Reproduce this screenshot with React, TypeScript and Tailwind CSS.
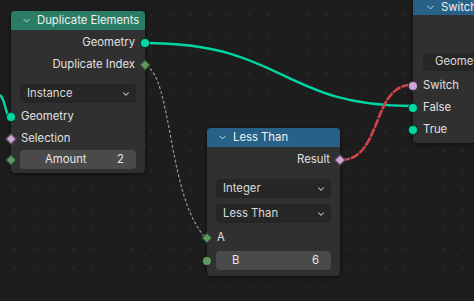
import { ChevronDown } from "lucide-react";
import type { ReactNode } from "react";

const TEAL = "#00d6a3";
const PINK = "#cca6d6";
const GREEN = "#5d9a62";

function Socket({ color, shape = "circle", side }: { color: string; shape?: "circle" | "diamond"; side: "left" | "right" }) {
  const pos = side === "left" ? "left-[-5px]" : "right-[-5px]";
  if (shape === "diamond") {
    return (
      <span
        className={`absolute ${pos} top-1/2 -translate-y-1/2 w-[10px] h-[10px] flex items-center justify-center`}
      >
        <span
          className="block w-[8px] h-[8px] shrink-0 rotate-45 border border-black/60"
          style={{ backgroundColor: color }}
        />
      </span>
    );
  }
  return (
    <span
      className={`absolute ${pos} top-1/2 -translate-y-1/2 w-[10px] h-[10px] rounded-full border border-black/70`}
      style={{ backgroundColor: color }}
    />
  );
}

function Row({ children, align = "left", className = "" }: { children: ReactNode; align?: "left" | "right"; className?: string }) {
  return (
    <div
      className={`relative h-[22px] flex items-center px-[10px] ${align === "right" ? "justify-end" : "justify-start"} ${className}`}
    >
      {children}
    </div>
  );
}

function Dropdown({ label, className = "" }: { label: string; className?: string }) {
  return (
    <div
      className={`mx-[9px] h-[19px] rounded-[4px] bg-[#262626] flex items-center justify-between pl-[7px] pr-[5px] text-[#dcdcdc] ${className}`}
    >
      <span>{label}</span>
      <ChevronDown size={10} strokeWidth={2.5} className="text-[#cfcfcf]" />
    </div>
  );
}

function Header({ title, color }: { title: string; color: string }) {
  return (
    <div
      className="h-[19px] rounded-t-[4px] flex items-center gap-[5px] pl-[10px] text-[#f0f0f0]"
      style={{ backgroundColor: color }}
    >
      <ChevronDown size={11} strokeWidth={1.75} />
      <span>{title}</span>
    </div>
  );
}

export default function App() {
  return (
    <div
      className="relative w-[474px] h-[301px] overflow-hidden bg-[#1d1d1d] bg-[radial-gradient(circle,#2a2a2a_1px,transparent_1.2px)] bg-[size:19.5px_19.5px] bg-[position:5px_5px] text-[11.3px] leading-none"
      style={{ fontFamily: "Inter, 'Noto Sans', sans-serif" }}
    >
      {/* Wires */}
      <svg className="absolute inset-0" width={474} height={301}>
        <path d="M0,95 C6,100 5,117 11,117" stroke={TEAL} strokeWidth={2.4} fill="none" />
        <path d="M146,66 C172,76 168,200 206,238" stroke="#8d9a86" strokeWidth={1.2} strokeDasharray="3 2" fill="none" />
        <path d="M145,43 C285,43 280,106 412,106" stroke={TEAL} strokeWidth={2.4} fill="none" />
        <path d="M341,160 C382,160 372,85 411,85" stroke="#d2444a" strokeWidth={2.6} strokeDasharray="9 1" fill="none" />
      </svg>

      {/* Duplicate Elements */}
      <div className="absolute left-[11px] top-[11px] w-[134px] rounded-[4px] bg-[#303030] shadow-[0_1px_4px_rgba(0,0,0,0.6)] text-[#e0e0e0]">
        <Header title="Duplicate Elements" color="#2b7c65" />
        <div className="pt-[2px] pb-[4px]">
          <Row align="right">
            Geometry
            <Socket color={TEAL} side="right" />
          </Row>
          <Row align="right">
            Duplicate Index
            <Socket color={GREEN} shape="diamond" side="right" />
          </Row>
          <Dropdown label="Instance" className="mt-[8px]" />
          <Row className="mt-[3px]">
            Geometry
            <Socket color={TEAL} side="left" />
          </Row>
          <Row>
            Selection
            <Socket color={PINK} shape="diamond" side="left" />
          </Row>
          <div className="relative">
            <Socket color={GREEN} shape="diamond" side="left" />
            <div className="mx-[9px] h-[19px] rounded-[4px] bg-[#4a4a4a] flex items-center justify-between pl-[25px] pr-[12px] text-[#e6e6e6]">
              <span>Amount</span>
              <span>2</span>
            </div>
          </div>
        </div>
      </div>

      {/* Less Than */}
      <div className="absolute left-[207px] top-[128px] w-[133px] rounded-[4px] bg-[#303030] shadow-[0_1px_4px_rgba(0,0,0,0.6)] text-[#e0e0e0]">
        <Header title="Less Than" color="#276187" />
        <div className="pt-[2px] pb-[6px]">
          <Row align="right">
            Result
            <Socket color={PINK} shape="diamond" side="right" />
          </Row>
          <Dropdown label="Integer" className="mt-[8px]" />
          <Dropdown label="Less Than" className="mt-[6px]" />
          <Row className="mt-[4px]">
            A
            <Socket color={GREEN} shape="diamond" side="left" />
          </Row>
          <div className="relative mt-[2px]">
            <Socket color={GREEN} side="left" />
            <div className="mx-[9px] h-[19px] rounded-[4px] bg-[#4a4a4a] flex items-center justify-between pl-[16px] pr-[12px] text-[#e6e6e6]">
              <span>B</span>
              <span>6</span>
            </div>
          </div>
        </div>
      </div>

      {/* Switch */}
      <div className="absolute left-[413px] top-[-4px] w-[120px] h-[147px] rounded-[4px] bg-[#303030] shadow-[0_1px_4px_rgba(0,0,0,0.6)] text-[#e0e0e0]">
        <div className="h-[19px] rounded-t-[4px] flex items-end pb-[2px] gap-[5px] pl-[12px] bg-[#276187] text-[#f0f0f0]">
          <ChevronDown size={11} strokeWidth={1.75} />
          <span>Switch</span>
        </div>
        <div className="h-[38px]" />
        <div className="ml-[10px] h-[18px] rounded-l-[4px] bg-[#262626] flex items-center pl-[12px] text-[#dcdcdc]">
          Geometry
        </div>
        <div className="mt-[4px]">
          <Row>
            Switch
            <Socket color={PINK} side="left" />
          </Row>
          <Row>
            False
            <Socket color={TEAL} side="left" />
          </Row>
          <Row>
            True
            <Socket color={TEAL} side="left" />
          </Row>
        </div>
      </div>
    </div>
  );
}
